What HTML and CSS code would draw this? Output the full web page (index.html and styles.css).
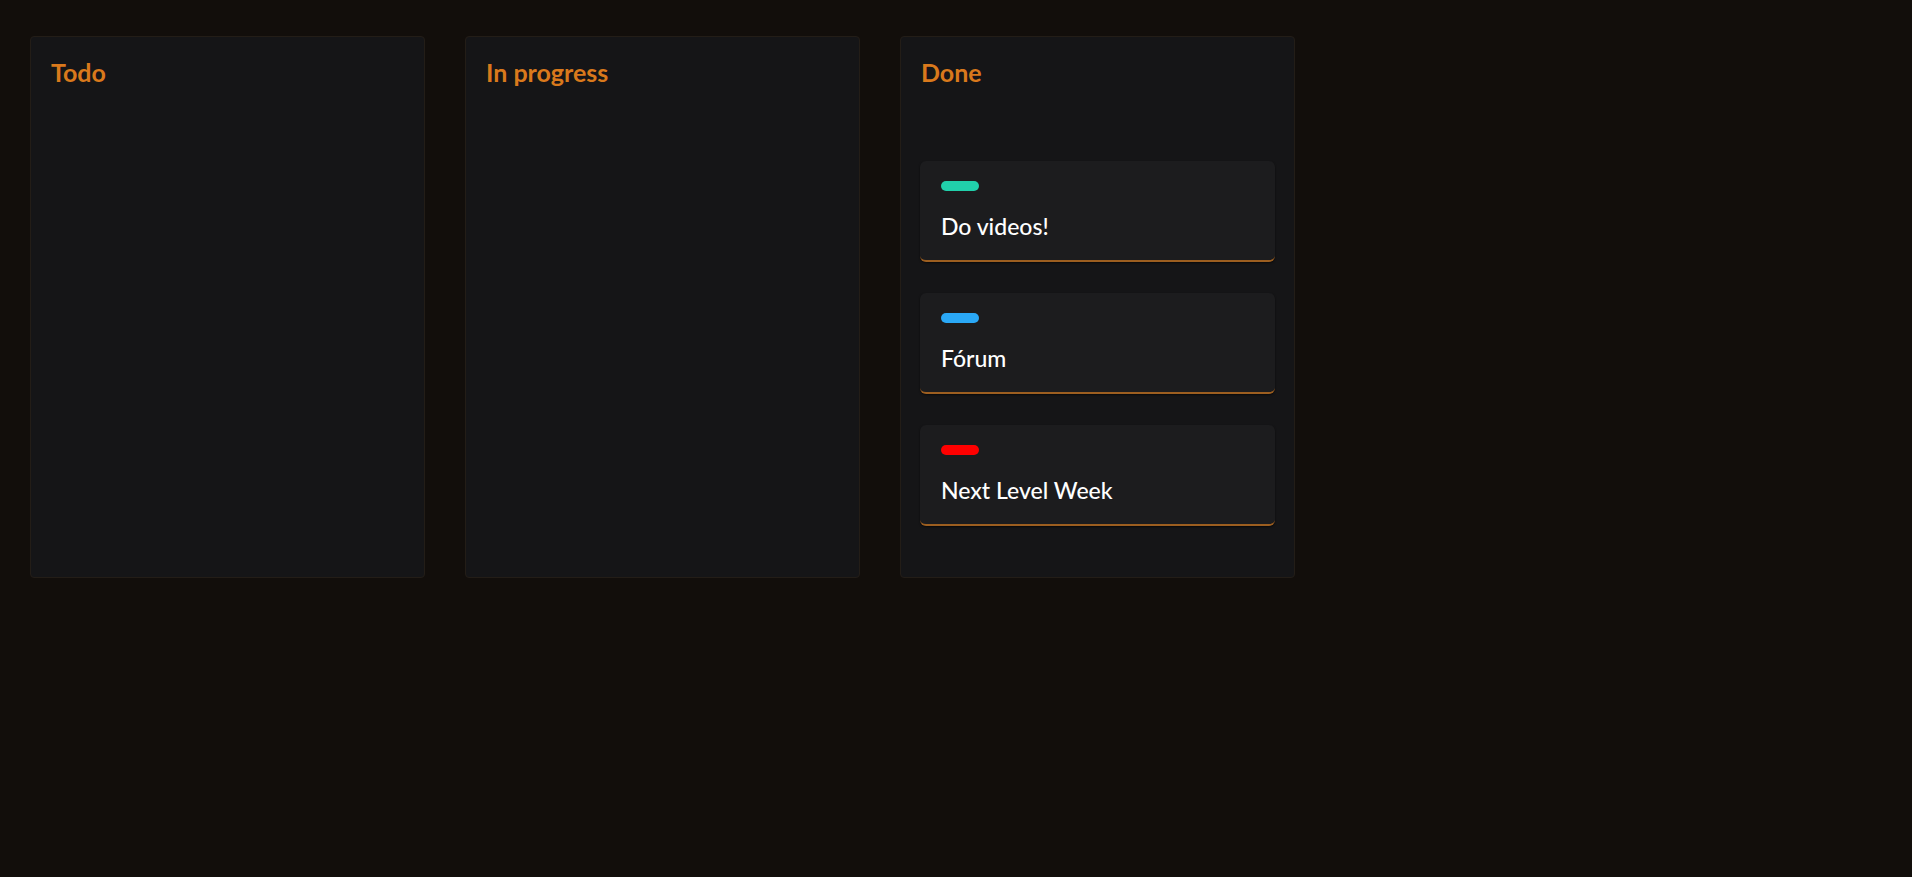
FILE: index.html
```html
<!DOCTYPE html>
<html lang="en">
<head>
<meta charset="utf-8">
<title>Board</title>
<link rel="stylesheet" href="styles.css">
</head>
<body>
<main class="board">
  <section class="column">
    <h2 class="column-title">Todo</h2>
    <div class="card-list"></div>
  </section>
  <section class="column">
    <h2 class="column-title">In progress</h2>
    <div class="card-list"></div>
  </section>
  <section class="column">
    <h2 class="column-title">Done</h2>
    <div class="card-list">
      <article class="card">
        <span class="tag tag-green"></span>
        <p class="card-text">Do videos!</p>
      </article>
      <article class="card">
        <span class="tag tag-blue"></span>
        <p class="card-text">Fórum</p>
      </article>
      <article class="card">
        <span class="tag tag-red"></span>
        <p class="card-text">Next Level Week</p>
      </article>
    </div>
  </section>
</main>
</body>
</html>
```

FILE: styles.css
```css
html, body {
  margin: 0;
  padding: 0;
  background: #120e0b;
  min-height: 100%;
}

body {
  font-family: "Lato", "Noto Sans", sans-serif;
  color: #ffffff;
}

.board {
  display: grid;
  grid-template-columns: repeat(3, 395px);
  column-gap: 40px;
  align-items: stretch;
  padding: 36px 30px;
}

.column {
  background: #151517;
  border: 1px solid #231d17;
  border-radius: 4px;
  padding: 20px;
}

.column-title {
  margin: 0 0 74px;
  font-size: 25px;
  line-height: 30px;
  font-weight: 700;
  color: #d9791c;
}

.card-list {
  display: flex;
  flex-direction: column;
}

.card {
  background: #1c1c1e;
  border-radius: 6px;
  border-bottom: 2px solid #9c5e20;
  box-shadow: 0 1px 2px rgba(0, 0, 0, 0.6);
  padding: 20px 21px 19px;
  margin: 0 -1px 31px;
}

.tag {
  display: block;
  width: 38px;
  height: 10px;
  border-radius: 5px;
}

.tag-green { background: #21d0ab; }
.tag-blue { background: #2aa8f6; }
.tag-red { background: #ff0000; }

.card-text {
  margin: 20px 0 0;
  font-size: 23px;
  line-height: 30px;
  font-weight: 500;
  color: #ffffff;
}
```
